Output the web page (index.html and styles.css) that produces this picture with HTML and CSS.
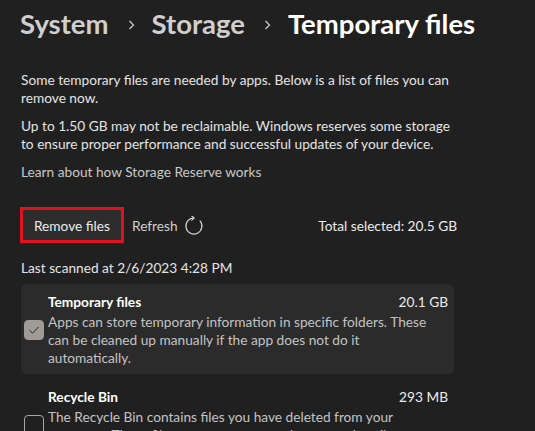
FILE: index.html
```html
<!DOCTYPE html>
<html lang="en">
<head>
  <meta charset="UTF-8">
  <title>Temporary files</title>
  <link rel="stylesheet" href="styles.css">
</head>
<body>
  <h1 class="crumbs">
    <span class="crumb">System</span>
    <svg class="sep" viewBox="0 0 7 10" width="7" height="10"><path d="M1.5 1 L5.5 5 L1.5 9" fill="none" stroke="#cfcfcf" stroke-width="1.2"/></svg>
    <span class="crumb">Storage</span>
    <svg class="sep" viewBox="0 0 7 10" width="7" height="10"><path d="M1.5 1 L5.5 5 L1.5 9" fill="none" stroke="#cfcfcf" stroke-width="1.2"/></svg>
    <span class="crumb current">Temporary files</span>
  </h1>

  <p class="intro">Some temporary files are needed by apps. Below is a list of files you can remove now.</p>
  <p class="intro">Up to 1.50 GB may not be reclaimable. Windows reserves some storage to ensure proper performance and successful updates of your device.</p>
  <a class="learn" href="#">Learn about how Storage Reserve works</a>

  <div class="toolbar">
    <div class="highlight">
      <button class="remove-btn">Remove files</button>
    </div>
    <button class="refresh-btn">Refresh
      <svg class="refresh-icon" viewBox="0 0 20 20" width="20" height="20">
        <path d="M16.1 4.9 A8 8 0 1 1 10 2" fill="none" stroke="#d0d0d0" stroke-width="1.2" stroke-linecap="round"/>
        <path d="M7.8 0 L10 2 L7.8 4.2" fill="none" stroke="#d0d0d0" stroke-width="1.2" stroke-linecap="round" stroke-linejoin="round"/>
      </svg>
    </button>
    <span class="total">Total selected: 20.5 GB</span>
  </div>

  <div class="scanned">Last scanned at 2/6/2023 4:28 PM</div>

  <div class="item selected">
    <span class="check checked">
      <svg viewBox="0 0 12 12" width="12" height="12"><path d="M1.5 6.3 L4.6 9.2 L10.5 3" fill="none" stroke="#262626" stroke-width="1"/></svg>
    </span>
    <div class="item-body">
      <div class="item-head">
        <span class="item-title">Temporary files</span>
        <span class="item-size">20.1 GB</span>
      </div>
      <div class="item-desc">Apps can store temporary information in specific folders. These can be cleaned up manually if the app does not do it automatically.</div>
    </div>
  </div>

  <div class="item">
    <span class="check"></span>
    <div class="item-body">
      <div class="item-head">
        <span class="item-title">Recycle Bin</span>
        <span class="item-size">293 MB</span>
      </div>
      <div class="item-desc">The Recycle Bin contains files you have deleted from your computer. These files are not permanently removed until you empty the Recycle Bin.</div>
    </div>
  </div>
</body>
</html>
```

FILE: styles.css
```css
:root {
  color-scheme: dark;
}
body {
  background: #202020;
  color: #e4e4e4;
  font-family: Lato, "Open Sans", sans-serif;
  font-size: 13.7px;
  margin: 0;
  padding: 0 20px 0 21px;
  overflow: hidden;
  height: 431px;
}
.crumbs {
  display: flex;
  align-items: center;
  margin: 4px 0 0 -1px;
  font-size: 27.5px;
  font-weight: 700;
  line-height: 40px;
  white-space: nowrap;
}
.crumb {
  color: #cfcfcf;
}
.crumb.current {
  color: #ffffff;
}
.sep {
  margin: 2px 17px 0 19px;
}
.intro {
  margin: 27px 0 0;
  line-height: 18px;
  max-width: 440px;
}
.intro + .intro {
  margin-top: 10px;
}
.learn {
  display: block;
  margin-top: 10px;
  line-height: 18px;
  color: #c8c8c8;
  text-decoration: none;
}
.toolbar {
  display: flex;
  align-items: center;
  margin-top: 26px;
  width: 436px;
}
.highlight {
  border: 3px solid #e3101f;
  margin-left: -1px;
  height: 30px;
  display: flex;
}
button {
  font-family: inherit;
  font-size: 13.7px;
  color: #ececec;
  border: 0;
  cursor: pointer;
  white-space: nowrap;
}
.remove-btn {
  background: #2d2d2d;
  padding: 0;
  width: 98px;
  border-radius: 0;
}
.refresh-btn {
  background: transparent;
  color: #cfcfcf;
  display: flex;
  align-items: center;
  gap: 6px;
  padding: 0;
  margin-left: 8px;
}
.refresh-icon {
  margin-top: 2px;
}
.total {
  margin-left: auto;
  color: #ececec;
}
.scanned {
  margin-top: 16px;
  line-height: 18px;
}
.item {
  display: flex;
  align-items: center;
  width: 433px;
  padding: 9px 6px 7px 3px;
  box-sizing: border-box;
  border-radius: 5px;
}
.item.selected {
  background: #2b2b2b;
  margin-top: 7px;
}
.item + .item {
  margin-top: 5px;
}
.check {
  flex: none;
  width: 20px;
  height: 20px;
  box-sizing: border-box;
  border: 1px solid #a8a8a8;
  border-radius: 4px;
  margin-right: 4px;
  display: flex;
  align-items: center;
  justify-content: center;
}
.check.checked {
  background: #9f9b96;
  border-color: #9f9b96;
}
.item-body {
  flex: 1;
}
.item-head {
  display: flex;
  justify-content: space-between;
  line-height: 18px;
}
.item-title {
  font-weight: 700;
  color: #ffffff;
}
.item-size {
  color: #ececec;
}
.item-desc {
  color: #c3c3c3;
  line-height: 18px;
  margin-top: 2px;
  padding-right: 14px;
}
```
